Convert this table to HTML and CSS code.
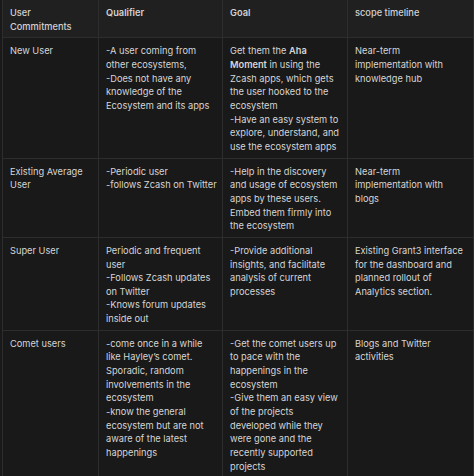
FILE: index.html
```html
<!DOCTYPE html>
<html>
<head>
<meta charset="utf-8">
<link rel="stylesheet" href="styles.css">
</head>
<body>
<table class="grid">
  <colgroup>
    <col class="c1"><col class="c2"><col class="c3"><col class="c4">
  </colgroup>
  <thead>
    <tr class="head">
      <th class="plain">User Commitments</th>
      <th>Qualifier</th>
      <th>Goal</th>
      <th class="plain">scope timeline</th>
    </tr>
  </thead>
  <tbody>
    <tr>
      <td>New User</td>
      <td>-A user coming from other ecosystems,<br>-Does not have any knowledge of the Ecosystem and its apps</td>
      <td>Get them the <b>Aha Moment</b> in using the Zcash apps, which gets the user hooked to the ecosystem<br>-Have an easy system to explore, understand, and use the ecosystem apps</td>
      <td>Near-term implementation with knowledge hub</td>
    </tr>
    <tr>
      <td>Existing Average User</td>
      <td>-Periodic user<br>-follows Zcash on Twitter</td>
      <td>-Help in the discovery and usage of ecosystem apps by these users. Embed them firmly into the ecosystem</td>
      <td>Near-term implementation with blogs</td>
    </tr>
    <tr>
      <td>Super User</td>
      <td>Periodic and frequent user<br>-Follows Zcash updates on Twitter<br>-Knows forum updates inside out</td>
      <td>-Provide additional insights, and facilitate analysis of current processes</td>
      <td>Existing Grant3 interface for the dashboard and planned rollout of Analytics section.</td>
    </tr>
    <tr>
      <td>Comet users</td>
      <td>-come once in a while like Hayley’s comet. Sporadic, random involvements in the ecosystem<br>-know the general ecosystem but are not aware of the latest happenings</td>
      <td>-Get the comet users up to pace with the happenings in the ecosystem<br>-Give them an easy view of the projects developed while they were gone and the recently supported projects</td>
      <td>Blogs and Twitter activities</td>
    </tr>
  </tbody>
</table>
</body>
</html>
```

FILE: styles.css
```css
html, body {
  margin: 0;
  padding: 0;
  background: #191919;
}
body {
  padding-left: 2px;
  font-family: Inter, "Liberation Sans", sans-serif;
  font-size: 9.25px;
  line-height: 13.65px;
  color: #d6d6d6;
}
.grid {
  border-collapse: collapse;
  table-layout: fixed;
  width: 471px;
}
.c1 { width: 96px; }
.c2 { width: 124px; }
.c3 { width: 125px; }
.c4 { width: 126px; }
.grid th, .grid td {
  border: 1px solid #2d2d2d;
  padding: 6px 6px 4px 7px;
  text-align: left;
  vertical-align: top;
}
.grid td:nth-child(2), .grid th:nth-child(2) { padding-right: 4px; }
.grid td { background: #191919; }
.grid th {
  background: #202020;
  font-weight: 600;
  color: #d2d2d2;
}
.grid th.plain { font-weight: 500; }
.grid tr.head th { border-top: none; height: 27px; }
.grid b { font-weight: 600; }
```
